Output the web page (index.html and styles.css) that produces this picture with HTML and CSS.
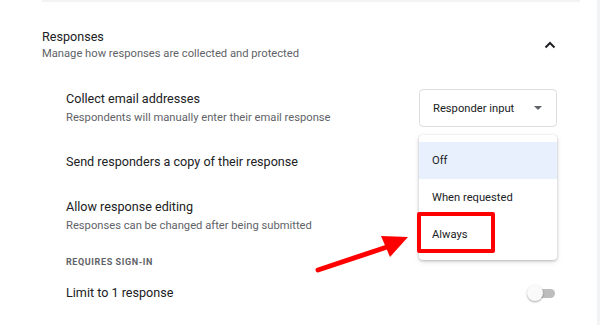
FILE: index.html
```
<!DOCTYPE html>
<html lang="en">
<head>
    <meta charset="UTF-8">
    <title>Responses settings</title>
    <link rel="stylesheet" href="styles.css">
</head>
<body>
    <div class="page">
        <div class="card">
            <div class="top-divider"></div>

            <div class="section">
                <!-- section header -->
                <div class="section-head">
                    <div>
                        <div class="section-title">Responses</div>
                        <div class="section-sub">Manage how responses are collected and protected</div>
                    </div>
                    <svg class="chevron" width="12" height="8" viewBox="0 0 12 8">
                        <path d="M1.5 6.5 L6 2 L10.5 6.5" fill="none" stroke="#202124" stroke-width="2"/>
                    </svg>
                </div>

                <div class="setting setting-email">
                    <div>
                        <div class="setting-title">Collect email addresses</div>
                        <div class="setting-sub">Respondents will manually enter their email response</div>
                    </div>
                    <div class="select">
                        <span>Responder input</span>
                        <span class="caret"></span>
                    </div>
                </div>

                <div class="setting setting-copy">
                    <div class="setting-title">Send responders a copy of their response</div>
                </div>

                <div class="setting setting-edit">
                    <div>
                        <div class="setting-title">Allow response editing</div>
                        <div class="setting-sub">Responses can be changed after being submitted</div>
                    </div>
                </div>

                <div class="group-label">REQUIRES SIGN-IN</div>

                <div class="setting setting-limit">
                    <div class="setting-title">Limit to 1 response</div>
                    <div class="toggle"><span class="knob"></span></div>
                </div>
            </div>
        </div>

        <!-- open dropdown menu -->
        <div class="menu">
            <div class="menu-item selected">Off</div>
            <div class="menu-item">When requested</div>
            <div class="menu-item">Always</div>
        </div>

        <!-- annotation -->
        <div class="highlight"></div>
        <svg class="arrow" width="110" height="50" viewBox="310 230 110 50">
            <line x1="318" y1="270" x2="390" y2="246" stroke="#ff0000" stroke-width="5" stroke-linecap="round"/>
            <polygon points="408,237 381,236 390,257" fill="#ff0000"/>
        </svg>
    </div>
</body>
</html>
```

FILE: styles.css
```
body {
    margin: 0;
    font-family: Roboto, "Liberation Sans", Arial, sans-serif;
    color: #202124;
    background: #f1f3f4;
}
.page {
    position: relative;
    width: 600px;
    height: 325px;
    overflow: hidden;
}
.card {
    width: 597px;
    height: 325px;
    background: white;
}
.top-divider {
    margin-left: 42px;
    width: 538px;
    height: 2px;
    background: #f1f3f4;
}
.section {
    padding: 26px 40px 0 42px;
}
.section-head {
    display: flex;
    justify-content: space-between;
    align-items: center;
}
.section-title {
    font-size: 12.6px;
    line-height: 18px;
}
.section-sub {
    font-size: 11.2px;
    line-height: 16px;
    color: #5f6368;
}
.chevron {
    margin-right: 1px;
}
.setting {
    display: flex;
    justify-content: space-between;
    align-items: center;
    margin-left: 24px;
}
.setting-title {
    font-size: 12.6px;
    line-height: 20px;
}
.setting-sub {
    font-size: 11.2px;
    line-height: 18px;
    color: #5f6368;
}
.setting-email {
    margin-top: 27px;
}
.setting-copy {
    margin-top: 25px;
}
.setting-edit {
    margin-top: 25px;
}
.group-label {
    margin: 21px 0 0 24px;
    font-size: 9px;
    line-height: 12px;
    font-weight: 700;
    letter-spacing: 0.6px;
    color: #5f6368;
}
.setting-limit {
    margin-top: 15px;
}
.select {
    width: 111px;
    height: 36px;
    padding: 0 12px 0 13px;
    border: 1px solid #dadce0;
    border-radius: 4px;
    display: flex;
    align-items: center;
    justify-content: space-between;
    font-size: 11.2px;
}
.caret {
    width: 0;
    height: 0;
    border-left: 4px solid transparent;
    border-right: 4px solid transparent;
    border-top: 4px solid #5f6368;
    margin-right: 2px;
}
.toggle {
    position: relative;
    width: 26px;
    height: 9px;
    margin-right: 2px;
    border-radius: 5px;
    background: #bdbdbd;
}
.knob {
    position: absolute;
    left: -2px;
    top: -4px;
    width: 16px;
    height: 16px;
    border-radius: 50%;
    background: #fafafa;
    box-shadow: 0 1px 2px rgba(0,0,0,0.35);
}
.menu {
    position: absolute;
    left: 419px;
    top: 135px;
    width: 138px;
    padding: 7px 0;
    background: white;
    border-radius: 4px;
    box-shadow: 0 1px 3px rgba(0,0,0,0.25), 0 2px 6px rgba(0,0,0,0.08);
}
.menu-item {
    height: 37px;
    line-height: 38px;
    padding-left: 13px;
    font-size: 11.2px;
    color: #202124;
}
.menu-item.selected {
    background: #e8f0fe;
}
.highlight {
    position: absolute;
    left: 417px;
    top: 212px;
    width: 70px;
    height: 33px;
    border: 4px solid #ff0000;
    border-radius: 2px;
}
.arrow {
    position: absolute;
    left: 310px;
    top: 230px;
}
```
